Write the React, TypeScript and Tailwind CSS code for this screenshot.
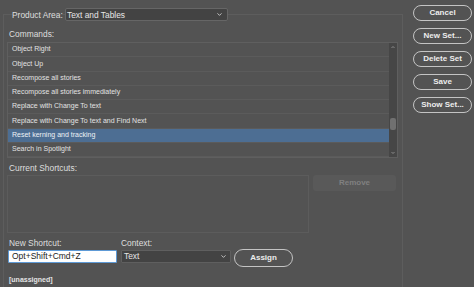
import { ChevronDown } from "lucide-react";

const commands = [
  "Object Right",
  "Object Up",
  "Recompose all stories",
  "Recompose all stories immediately",
  "Replace with Change To text",
  "Replace with Change To text and Find Next",
  "Reset kerning and tracking",
  "Search in Spotlight",
];

const sideButtons = ["Cancel", "New Set...", "Delete Set", "Save", "Show Set..."];

export default function App() {
  const selected = "Reset kerning and tracking";

  return (
    <div
      className="flex w-[474px] h-[287px] bg-[#535353] text-[#dedede] overflow-hidden"
      style={{ fontFamily: '"Liberation Sans", Arial, sans-serif' }}
    >
      {/* Left panel */}
      <div className="ml-[3px] mt-[14px] w-[400px] h-[273px] border-l border-t border-r border-[#5d5d5d] flex flex-col">
        {/* Product area */}
        <div className="-mt-[7px] h-[13px] flex items-center pl-[8px]">
          <span className="w-[53px] text-[8.4px] leading-[10px] whitespace-nowrap">Product Area:</span>
          <div className="w-[163px] h-[13px] flex items-center justify-between bg-[#434343] border border-[#666] rounded-[2px] pl-[1px] pr-[4px]">
            <span className="text-[8.4px] leading-[10px] text-[#e6e6e6]">Text and Tables</span>
            <ChevronDown className="w-[7px] h-[7px] text-[#cfcfcf]" strokeWidth={3} />
          </div>
        </div>

        {/* Commands */}
        <div className="mt-[8px] pl-[5px] text-[8.4px] leading-[10px]">Commands:</div>
        <div className="mt-[3px] ml-[3px] w-[391px] h-[116px] border border-[#5f5f5f] flex">
          <div className="flex-1 flex flex-col">
            {commands.map((c) => (
              <div
                key={c}
                className={`h-[14.25px] flex items-center pl-[4px] text-[7px] border-b border-[#5b5b5b] ${
                  c === selected ? "bg-[#4d6e93] text-[#eef2f6]" : "text-[#e2e2e2]"
                }`}
              >
                {c}
              </div>
            ))}
          </div>
          {/* Scrollbar */}
          <div className="w-[8px] bg-[#464646] flex flex-col items-center">
            <svg width="6" height="10" viewBox="0 0 6 10" className="shrink-0">
              <path d="M1.5 5 L3 3.5 L4.5 5" stroke="#9a9a9a" strokeWidth="0.8" fill="none" />
            </svg>
            <div className="h-[65px]" />
            <div className="w-[6px] h-[12px] rounded-[2px] bg-[#707070]" />
            <div className="flex-1" />
            <svg width="6" height="8" viewBox="0 0 6 8" className="shrink-0">
              <path d="M1.5 3 L3 4.5 L4.5 3" stroke="#9a9a9a" strokeWidth="0.8" fill="none" />
            </svg>
          </div>
        </div>

        {/* Current shortcuts */}
        <div className="mt-[5px] pl-[5px] text-[8.4px] leading-[10px]">Current Shortcuts:</div>
        <div className="mt-[2px] flex items-start">
          <div className="ml-[3px] w-[302px] h-[58px] border border-[#5c5c5c]" />
          <button className="ml-[4px] w-[83px] h-[16px] rounded-[3px] bg-[#595959] text-[8px] font-bold text-[#808080]">
            Remove
          </button>
        </div>

        {/* New shortcut */}
        <div className="mt-[5px] flex items-start">
          <div className="ml-[4px] w-[109px] flex flex-col">
            <div className="pl-[1px] text-[8.4px] leading-[10px]">New Shortcut:</div>
            <div className="mt-[2px] h-[13px] bg-white border border-[#5e9ad6] rounded-[1px] flex items-center pl-[3px] text-[8.5px] text-[#222]">
              Opt+Shift+Cmd+Z
            </div>
          </div>
          <div className="ml-[4px] w-[110px] flex flex-col">
            <div className="text-[8.4px] leading-[10px]">Context:</div>
            <div className="mt-[2px] h-[13px] bg-[#434343] border border-[#5f5f5f] rounded-[1px] flex items-center justify-between pl-[2px] pr-[3px]">
              <span className="text-[8.4px] text-[#e6e6e6]">Text</span>
              <ChevronDown className="w-[7px] h-[7px] text-[#cfcfcf]" strokeWidth={3} />
            </div>
          </div>
          <button className="ml-[3px] mt-[11px] w-[59px] h-[18px] rounded-full border-[1.5px] border-[#c4c4c4] text-[8px] font-bold text-[#ededed]">
            Assign
          </button>
        </div>

        <div className="mt-[8px] pl-[5px] text-[7px] font-bold leading-[10px] text-[#e4e4e4]">[unassigned]</div>
      </div>

      {/* Right buttons */}
      <div className="flex-1 pl-[10px] pt-[5px] flex flex-col gap-[7px]">
        {sideButtons.map((b) => (
          <button
            key={b}
            className="w-[59px] h-[16px] rounded-full border-[1.5px] border-[#c4c4c4] text-[8px] font-bold text-[#ededed] leading-none"
          >
            {b}
          </button>
        ))}
      </div>
    </div>
  );
}
